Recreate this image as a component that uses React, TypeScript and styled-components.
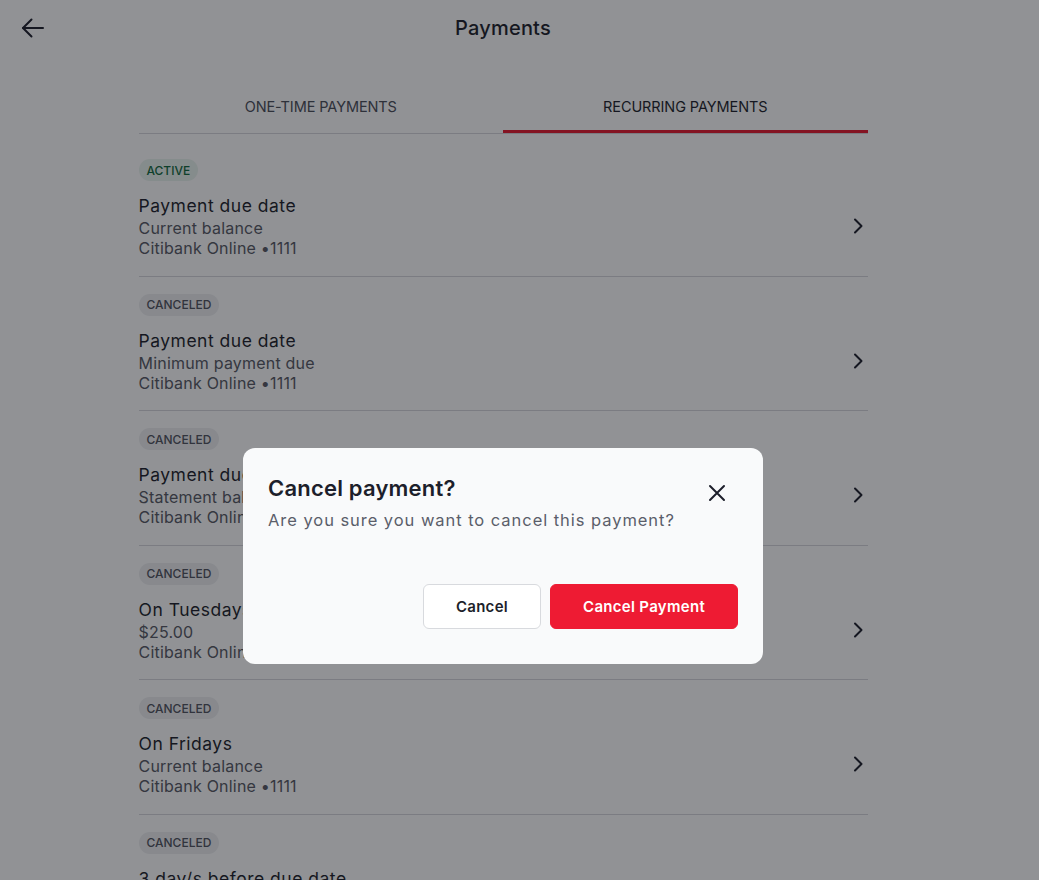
import React from "react";
import styled, { createGlobalStyle } from "styled-components";

type Status = "active" | "canceled";

interface Payment {
  status: Status;
  title: string;
  amount: string;
  account: string;
}

const payments: Payment[] = [
  { status: "active", title: "Payment due date", amount: "Current balance", account: "Citibank Online •1111" },
  { status: "canceled", title: "Payment due date", amount: "Minimum payment due", account: "Citibank Online •1111" },
  { status: "canceled", title: "Payment due date", amount: "Statement balance", account: "Citibank Online •1111" },
  { status: "canceled", title: "On Tuesdays", amount: "$25.00", account: "Citibank Online •1111" },
  { status: "canceled", title: "On Fridays", amount: "Current balance", account: "Citibank Online •1111" },
  { status: "canceled", title: "3 day/s before due date", amount: "Current balance", account: "Citibank Online •1111" },
];

const App: React.FC = () => {
  return (
    <>
      <GlobalStyle />
      <Page>
        <Header>
          <BackButton aria-label="Back">
            <svg width="24" height="20" viewBox="0 0 24 20" fill="none" stroke="currentColor" strokeWidth="2" strokeLinecap="round" strokeLinejoin="round">
              <path d="M22 10H2" />
              <path d="M10.5 1.5L2 10l8.5 8.5" />
            </svg>
          </BackButton>
          <Title>Payments</Title>
          <span />
        </Header>

        <TabBar>
          <Tab>One-time payments</Tab>
          <Tab $active>Recurring payments</Tab>
        </TabBar>

        <List>
          {payments.map((p, i) => (
            <Item key={i}>
              <Badge $status={p.status}>{p.status === "active" ? "ACTIVE" : "CANCELED"}</Badge>
              <ItemRow>
                <ItemText>
                  <ItemTitle>{p.title}</ItemTitle>
                  <ItemSub>{p.amount}</ItemSub>
                  <ItemSub>{p.account}</ItemSub>
                </ItemText>
                <Chevron width="10" height="16" viewBox="0 0 10 16" fill="none" stroke="currentColor" strokeWidth="2" strokeLinecap="round" strokeLinejoin="round">
                  <polyline points="2,1.5 8.5,8 2,14.5" />
                </Chevron>
              </ItemRow>
            </Item>
          ))}
        </List>
      </Page>

      <Overlay>
        <Dialog role="dialog" aria-modal="true">
          <DialogHead>
            <DialogTitle>Cancel payment?</DialogTitle>
            <CloseButton aria-label="Close">
              <svg width="18" height="18" viewBox="0 0 18 18" fill="none" stroke="currentColor" strokeWidth="2" strokeLinecap="round">
                <path d="M2 2l14 14M16 2L2 16" />
              </svg>
            </CloseButton>
          </DialogHead>
          <DialogText>Are you sure you want to cancel this payment?</DialogText>
          <Actions>
            <Button>Cancel</Button>
            <Button $primary>Cancel Payment</Button>
          </Actions>
        </Dialog>
      </Overlay>
    </>
  );
};

export default App;

const GlobalStyle = createGlobalStyle`
  html, body {
    margin: 0;
    padding: 0;
    overflow: hidden;
    background: #ffffff;
  }
  body {
    font-family: Inter, "Open Sans", sans-serif;
    color: #1d1f2b;
  }
  * {
    box-sizing: border-box;
  }
`;

const Page = styled.div`
  width: 1006px;
  height: 880px;
  overflow: hidden;
`;

const Header = styled.header`
  display: grid;
  grid-template-columns: 80px 1fr 80px;
  align-items: center;
  height: 56px;
`;

const BackButton = styled.button`
  display: flex;
  align-items: center;
  justify-content: flex-start;
  padding: 0 0 0 21px;
  height: 40px;
  border: none;
  background: none;
  color: #1d1f2b;
  cursor: pointer;
`;

const Title = styled.h1`
  margin: 0;
  text-align: center;
  font-size: 20px;
  font-weight: 500;
  letter-spacing: 0.2px;
  color: #1d1f2b;
`;

const TabBar = styled.nav`
  display: grid;
  grid-template-columns: 1fr 1fr;
  width: 729px;
  margin: 25px auto 0;
  border-bottom: 1px solid #d6d7dc;
`;

const Tab = styled.div<{ $active?: boolean }>`
  padding: 15px 0 15px;
  line-height: 22px;
  text-align: center;
  font-size: 14.5px;
  font-weight: 400;
  letter-spacing: -0.1px;
  text-transform: uppercase;
  color: ${(p) => (p.$active ? "#1d1f2b" : "#4a4d58")};
  box-shadow: ${(p) => (p.$active ? "inset 0 -3px 0 #e8182e" : "none")};
`;

const List = styled.div`
  width: 729px;
  margin: 0 auto;
  padding-top: 8px;
`;

const Item = styled.div`
  display: flex;
  flex-direction: column;
  align-items: flex-start;
  padding: 17px 0 17.6px;
  border-bottom: 1px solid #d6d7dc;
`;

const Badge = styled.span<{ $status: Status }>`
  display: inline-flex;
  align-items: center;
  height: 22px;
  padding: 0 8px;
  border-radius: 11px;
  font-size: 12px;
  font-weight: 500;
  letter-spacing: 0;
  color: ${(p) => (p.$status === "active" ? "#106a3e" : "#50535e")};
  background: ${(p) => (p.$status === "active" ? "#eaf4ee" : "#eeeff1")};
`;

const ItemRow = styled.div`
  display: flex;
  align-items: center;
  justify-content: space-between;
  width: 100%;
  margin-top: 13px;
`;

const ItemText = styled.div`
  display: flex;
  flex-direction: column;
`;

const ItemTitle = styled.div`
  font-size: 17.5px;
  line-height: 24px;
  font-weight: 400;
  letter-spacing: 0.5px;
  color: #1d1f2b;
`;

const ItemSub = styled.div`
  font-size: 16px;
  line-height: 20px;
  letter-spacing: 0.2px;
  color: #565964;
`;

const Chevron = styled.svg`
  margin-right: 5px;
  color: #1d1f2b;
  flex-shrink: 0;
`;

const Overlay = styled.div`
  position: fixed;
  inset: 0;
  display: flex;
  justify-content: center;
  align-items: flex-start;
  padding: 448px 33px 0 0;
  background: rgba(14, 16, 22, 0.455);
`;

const Dialog = styled.div`
  width: 520px;
  height: 216px;
  padding: 25px 25px 35px;
  border-radius: 12px;
  background: #f9fafb;
  display: flex;
  flex-direction: column;
`;

const DialogHead = styled.div`
  display: flex;
  justify-content: space-between;
  align-items: flex-start;
  height: 30px;
`;

const DialogTitle = styled.h2`
  margin: 0;
  font-size: 22px;
  line-height: 30px;
  font-weight: 600;
  letter-spacing: 0.2px;
  color: #1d1f2b;
`;

const CloseButton = styled.button`
  display: flex;
  align-items: center;
  justify-content: center;
  width: 32px;
  height: 32px;
  margin: 4px 5px 0 0;
  padding: 0;
  border: none;
  background: none;
  color: #1d1f2b;
  cursor: pointer;
`;

const DialogText = styled.p`
  margin: 5px 0 0;
  font-size: 16.5px;
  line-height: 24px;
  letter-spacing: 0.95px;
  color: #5b5e6a;
`;

const Actions = styled.div`
  display: flex;
  justify-content: flex-end;
  gap: 9px;
  margin-top: auto;
`;

const Button = styled.button<{ $primary?: boolean }>`
  height: 45px;
  padding: 0 32px;
  border-radius: 6px;
  font-family: inherit;
  font-size: 15px;
  font-weight: 600;
  letter-spacing: 0.3px;
  cursor: pointer;
  border: 1px solid ${(p) => (p.$primary ? "#ee1b33" : "#d8dade")};
  background: ${(p) => (p.$primary ? "#ee1b33" : "#ffffff")};
  color: ${(p) => (p.$primary ? "#ffffff" : "#1d1f2b")};
`;
